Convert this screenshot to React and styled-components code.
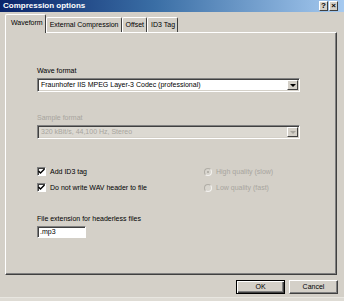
import React from "react";
import styled, { createGlobalStyle } from "styled-components";

const GlobalStyle = createGlobalStyle`
  html, body {
    margin: 0;
    padding: 0;
    background: #d4d0c8;
  }
  body {
    font-family: "Liberation Sans", Arial, sans-serif;
    font-size: 7px;
  }
`;

const Window = styled.div`
  width: 344px;
  height: 301px;
  background: #d4d0c8;
  display: flex;
  flex-direction: column;
  overflow: hidden;
  color: #000;
`;

const TitleBar = styled.div`
  height: 12px;
  display: flex;
  align-items: center;
  justify-content: space-between;
  padding-left: 3px;
  padding-right: 6px;
  background: linear-gradient(to right, #0a246a 0%, #3a6ea5 45%, #a6caf0 100%);
`;

const Title = styled.span`
  color: #fff;
  font-weight: bold;
  font-size: 8px;
  line-height: 12px;
`;

const TitleButtons = styled.div`
  display: flex;
  gap: 1px;
`;

const TitleBtn = styled.div`
  width: 9px;
  height: 10px;
  box-sizing: border-box;
  background: #d4d0c8;
  border: 1px solid;
  border-color: #fff #404040 #404040 #fff;
  display: flex;
  align-items: center;
  justify-content: center;
  font-weight: bold;
  font-size: 8px;
  line-height: 8px;
`;

const Body = styled.div`
  padding: 2px 0 0 5px;
  display: flex;
  flex-direction: column;
`;

const Tabs = styled.div`
  display: flex;
  align-items: flex-end;
  height: 18px;
`;

const Tab = styled.div`
  position: relative;
  box-sizing: border-box;
  height: ${p => (p.active ? "19px" : "15px")};
  margin-bottom: ${p => (p.active ? "-1px" : "0")};
  z-index: ${p => (p.active ? 1 : 0)};
  padding: ${p => (p.active ? "3px 2px 0 5px" : "2px 2px 0 3px")};
  background: #d4d0c8;
  border-top: 1px solid #fff;
  border-left: 1px solid #fff;
  border-right: 1px solid #404040;
  border-radius: 2px 2px 0 0;
  line-height: 10px;
  white-space: nowrap;
`;

const Panel = styled.div`
  width: 332px;
  height: 243px;
  box-sizing: border-box;
  border-top: 1px solid #fff;
  border-left: 1px solid #fff;
  border-right: 1px solid #404040;
  border-bottom: 1px solid #404040;
  box-shadow: inset -1px -1px #808080;
  padding-left: 31px;
  display: flex;
  flex-direction: column;
`;

const Group = styled.div`
  display: flex;
  flex-direction: column;
  margin-top: ${p => p.top}px;
`;

const Label = styled.div`
  line-height: 10px;
  height: 10px;
  margin-bottom: 2px;
  color: ${p => (p.disabled ? "#a8a59e" : "#000")};
`;

const Select = styled.div`
  width: ${p => p.width}px;
  height: 14px;
  box-sizing: border-box;
  border: 1px solid;
  border-color: #808080 #fff #fff #808080;
  box-shadow: inset 1px 1px #404040, inset -1px -1px #d4d0c8;
  background: ${p => (p.disabled ? "#dcd9d2" : "#fff")};
  color: ${p => (p.disabled ? "#a8a59e" : "#000")};
  display: flex;
  align-items: center;
  justify-content: space-between;
  padding: 0 1px 0 3px;
  line-height: 12px;
`;

const DropBtn = styled.div`
  width: 11px;
  height: 10px;
  box-sizing: border-box;
  background: #d4d0c8;
  border: 1px solid;
  border-color: #fff #404040 #404040 #fff;
  display: flex;
  align-items: center;
  justify-content: center;
  color: ${p => (p.disabled ? "#a8a59e" : "#000")};
`;

const Arrow = styled.div`
  width: 0;
  height: 0;
  border-left: 3px solid transparent;
  border-right: 3px solid transparent;
  border-top: 3px solid currentColor;
`;

const OptionsRow = styled.div`
  display: flex;
  margin-top: 28px;
`;

const OptionCol = styled.div`
  display: flex;
  flex-direction: column;
  gap: 7px;
  width: ${p => p.width}px;
`;

const Option = styled.div`
  display: flex;
  align-items: center;
  height: 9px;
  gap: 4px;
  color: ${p => (p.disabled ? "#a8a59e" : "#000")};
  white-space: nowrap;
`;

const CheckBox = styled.div`
  width: 9px;
  height: 9px;
  box-sizing: border-box;
  background: #fff;
  border: 1px solid;
  border-color: #808080 #fff #fff #808080;
  box-shadow: inset 1px 1px #404040;
  display: flex;
  align-items: center;
  justify-content: center;
`;

const Radio = styled.div`
  width: 8px;
  height: 8px;
  box-sizing: border-box;
  border-radius: 50%;
  border: 1px solid #b0ada6;
  border-right-color: #f4f3f0;
  border-bottom-color: #f4f3f0;
  background: #d8d5ce;
  display: flex;
  align-items: center;
  justify-content: center;

  &::after {
    content: "";
    display: ${p => (p.checked ? "block" : "none")};
    width: 2px;
    height: 2px;
    border-radius: 50%;
    background: #a8a59e;
  }
`;

const TextInput = styled.div`
  width: 49px;
  height: 12px;
  box-sizing: border-box;
  border: 1px solid;
  border-color: #808080 #fff #fff #808080;
  box-shadow: inset 1px 1px #404040;
  background: #fff;
  padding-left: 2px;
  line-height: 10px;
`;

const Footer = styled.div`
  display: flex;
  justify-content: flex-end;
  gap: 4px;
  margin-top: 5px;
  padding-right: 6px;
`;

const Button = styled.div`
  width: 49px;
  height: 14px;
  box-sizing: border-box;
  background: #d4d0c8;
  border: 1px solid;
  border-color: ${p => (p.primary ? "#000" : "#fff #404040 #404040 #fff")};
  box-shadow: ${p =>
    p.primary
      ? "inset 1px 1px #fff, inset -1px -1px #404040, inset -2px -2px #808080"
      : "inset -1px -1px #808080"};
  display: flex;
  align-items: center;
  justify-content: center;
  line-height: 12px;
`;

const BottomEdge = styled.div`
  margin-top: auto;
  height: 3px;
  background: #dedbd4;
  border-top: 1px solid #e8e6e0;
`;

const Check = () => (
  <svg width="7" height="7" viewBox="0 0 7 7">
    <path d="M0.5 3 L2.5 5 L6.5 1" stroke="#000" strokeWidth="1.4" fill="none" />
  </svg>
);

export default function App() {
  return (
    <>
      <GlobalStyle />
      <Window>
        <TitleBar>
          <Title>Compression options</Title>
          <TitleButtons>
            <TitleBtn>?</TitleBtn>
            <TitleBtn>×</TitleBtn>
          </TitleButtons>
        </TitleBar>
        <Body>
          <Tabs>
            <Tab active>Waveform</Tab>
            <Tab>External Compression</Tab>
            <Tab>Offset</Tab>
            <Tab>ID3 Tag</Tab>
          </Tabs>
          <Panel>
            <Group top={33}>
              <Label>Wave format</Label>
              <Select width={263}>
                <span>Fraunhofer IIS MPEG Layer-3 Codec (professional)</span>
                <DropBtn>
                  <Arrow />
                </DropBtn>
              </Select>
            </Group>
            <Group top={21}>
              <Label disabled>Sample format</Label>
              <Select width={263} disabled>
                <span>320 kBit/s, 44,100 Hz, Stereo</span>
                <DropBtn disabled>
                  <Arrow />
                </DropBtn>
              </Select>
            </Group>
            <OptionsRow>
              <OptionCol width={167}>
                <Option>
                  <CheckBox>
                    <Check />
                  </CheckBox>
                  Add ID3 tag
                </Option>
                <Option>
                  <CheckBox>
                    <Check />
                  </CheckBox>
                  Do not write WAV header to file
                </Option>
              </OptionCol>
              <OptionCol>
                <Option disabled>
                  <Radio checked />
                  High quality (slow)
                </Option>
                <Option disabled>
                  <Radio />
                  Low quality (fast)
                </Option>
              </OptionCol>
            </OptionsRow>
            <Group top={22}>
              <Label>File extension for headerless files</Label>
              <TextInput>.mp3</TextInput>
            </Group>
          </Panel>
          <Footer>
            <Button primary>OK</Button>
            <Button>Cancel</Button>
          </Footer>
        </Body>
        <BottomEdge />
      </Window>
    </>
  );
}
